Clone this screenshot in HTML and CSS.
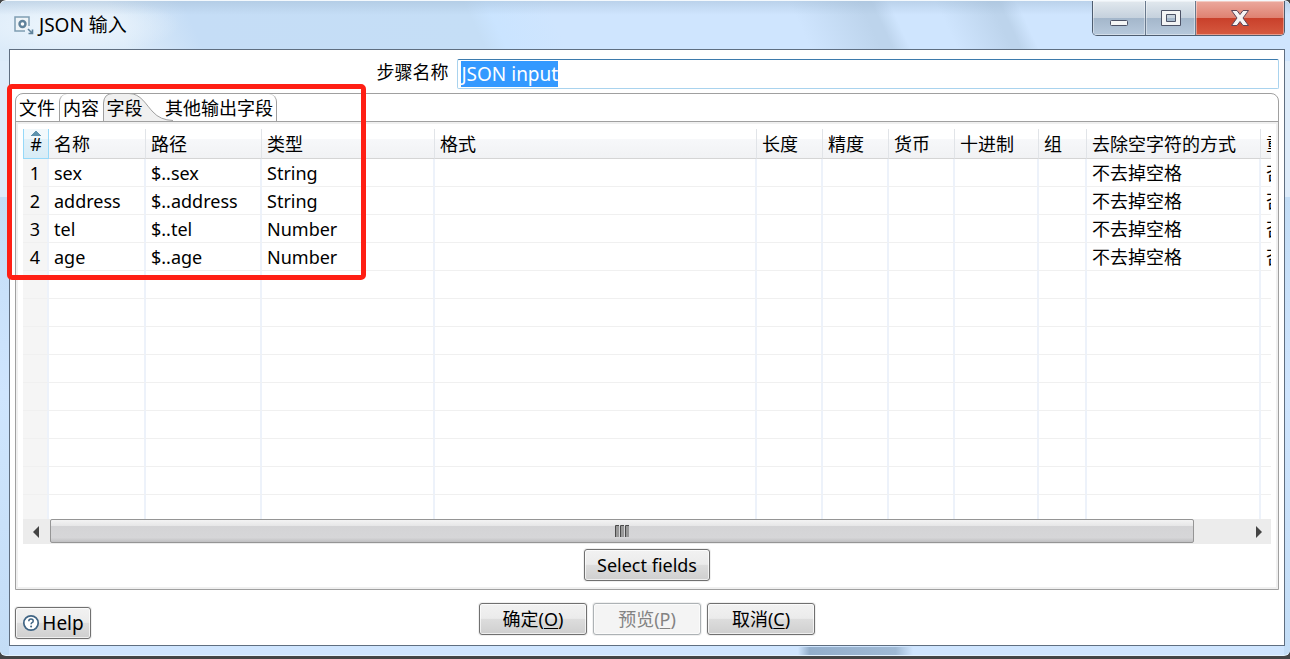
FILE: index.html
```
<!doctype html>
<html lang="zh-CN">
    <head>
        <meta charset="UTF-8" />
        <meta name="viewport" content="width=device-width" />
        <title>JSON 输入</title>
        <link rel="stylesheet" href="styles.css">
        <script src="script.js" defer></script>
    </head>
    <body>
        <div class="window">
            <header class="titlebar">
                <svg class="titleIcon" width="20" height="20" viewBox="0 0 20 20">
                    <path d="M11 16H1V2h14v9" fill="#eef4f8" stroke="#7f9db3" stroke-width="1.5" />
                    <circle cx="8.5" cy="9" r="3" fill="#fff" stroke="#5f829b" stroke-width="2.4" />
                    <path d="M14 14l4 4M18.500 14.500v4h-4" fill="none" stroke="#5f829b" stroke-width="1.6" />
                </svg>
                <h1>JSON 输入</h1>
                <div class="windowButtons">
                    <button class="minimize" title="最小化">
                        <svg width="20" height="8" viewBox="0 0 20 8">
                            <rect x="1.500" y="1.500" width="17" height="5" rx="1" fill="#f5f6f6" stroke="#4c5266" />
                        </svg>
                    </button>
                    <button class="maximize" title="最大化">
                        <svg width="20" height="16" viewBox="0 0 20 16">
                            <path d="M.5.500h19v15H.5zM5.500 4.500h9v7h-9z" fill="#f3f4f5" fill-rule="evenodd" stroke="#4c5266" />
                        </svg>
                    </button>
                    <button class="close" title="关闭">
                        <svg width="20" height="18" viewBox="0 0 20 18">
                            <path d="M1.500 1.500h5.500l3 4 3-4h5.500l-5.500 7.500 5.500 7.500h-5.500l-3-4-3 4H1.500l5.500-7.500z" fill="#f5f3f4" stroke="#5c4456" stroke-linejoin="round" />
                        </svg>
                    </button>
                </div>
            </header>
            <main class="dialog">
                <div class="stepName">
                    <label for="step">步骤名称</label>
                    <input type="text" id="step" value="JSON input" />
                </div>
                <section class="folder">
                    <nav class="tabs">
                        <button class="tab">文件</button>
                        <button class="tab">内容</button>
                        <button class="tab selected">
                            <svg width="73" height="28" viewBox="0 0 73 28">
                                <path d="M0 28V10Q1 .5 10 .5H26C38 .5 43 12 50 19Q57 27 70 27.500V28z" fill="#f0f0f0" />
                                <path d="M.5 28V10Q1 .5 10 .5H26C38 .5 43 12 50 19Q57 27 70 27.500" fill="none" stroke="#a0a0a0" />
                            </svg>
                            <span>字段</span>
                        </button>
                        <button class="tab last">其他输出字段</button>
                    </nav>
                    <div class="pane">
                        <div class="tableWrapper">
                            <table>
                                <colgroup>
                                    <col class="colNumber" />
                                    <col class="colName" />
                                    <col class="colPath" />
                                    <col class="colType" />
                                    <col class="colFormat" />
                                    <col class="colShort" />
                                    <col class="colShort" />
                                    <col class="colShort" />
                                    <col class="colDecimal" />
                                    <col class="colGroup" />
                                    <col class="colTrim" />
                                    <col class="colShort" />
                                </colgroup>
                                <thead>
                                    <tr>
                                        <th class="sorted">#</th>
                                        <th>名称</th>
                                        <th>路径</th>
                                        <th>类型</th>
                                        <th>格式</th>
                                        <th>长度</th>
                                        <th>精度</th>
                                        <th>货币</th>
                                        <th>十进制</th>
                                        <th>组</th>
                                        <th>去除空字符的方式</th>
                                        <th>重复</th>
                                    </tr>
                                </thead>
                                <tbody>
                                    <tr><td>1</td><td>sex</td><td>$..sex</td><td>String</td><td></td><td></td><td></td><td></td><td></td><td></td><td>不去掉空格</td><td>否</td></tr>
                                    <tr><td>2</td><td>address</td><td>$..address</td><td>String</td><td></td><td></td><td></td><td></td><td></td><td></td><td>不去掉空格</td><td>否</td></tr>
                                    <tr><td>3</td><td>tel</td><td>$..tel</td><td>Number</td><td></td><td></td><td></td><td></td><td></td><td></td><td>不去掉空格</td><td>否</td></tr>
                                    <tr><td>4</td><td>age</td><td>$..age</td><td>Number</td><td></td><td></td><td></td><td></td><td></td><td></td><td>不去掉空格</td><td>否</td></tr>
                                    <tr><td></td><td></td><td></td><td></td><td></td><td></td><td></td><td></td><td></td><td></td><td></td><td></td></tr>
                                    <tr><td></td><td></td><td></td><td></td><td></td><td></td><td></td><td></td><td></td><td></td><td></td><td></td></tr>
                                    <tr><td></td><td></td><td></td><td></td><td></td><td></td><td></td><td></td><td></td><td></td><td></td><td></td></tr>
                                    <tr><td></td><td></td><td></td><td></td><td></td><td></td><td></td><td></td><td></td><td></td><td></td><td></td></tr>
                                    <tr><td></td><td></td><td></td><td></td><td></td><td></td><td></td><td></td><td></td><td></td><td></td><td></td></tr>
                                    <tr><td></td><td></td><td></td><td></td><td></td><td></td><td></td><td></td><td></td><td></td><td></td><td></td></tr>
                                    <tr><td></td><td></td><td></td><td></td><td></td><td></td><td></td><td></td><td></td><td></td><td></td><td></td></tr>
                                    <tr><td></td><td></td><td></td><td></td><td></td><td></td><td></td><td></td><td></td><td></td><td></td><td></td></tr>
                                    <tr><td></td><td></td><td></td><td></td><td></td><td></td><td></td><td></td><td></td><td></td><td></td><td></td></tr>
                                </tbody>
                            </table>
                        </div>
                        <div class="scrollbar">
                            <button class="arrow" title="向左滚动">
                                <svg width="6" height="12" viewBox="0 0 6 12"><path d="M6 0v12L0 6z" fill="#444" /></svg>
                            </button>
                            <div class="track">
                                <div class="thumb">
                                    <svg width="15" height="12" viewBox="0 0 15 12">
                                        <path d="M1 0h3v12H1zM6 0h3v12H6zM11 0h3v12h-3z" fill="#999" />
                                        <path d="M.5 12V.5H4M5.500 12V.5H9M10.500 12V.5H14" fill="none" stroke="#4a4a4a" />
                                    </svg>
                                </div>
                            </div>
                            <button class="arrow" title="向右滚动">
                                <svg width="6" height="12" viewBox="0 0 6 12"><path d="M0 0v12l6-6z" fill="#444" /></svg>
                            </button>
                        </div>
                        <button class="btn selectFields">Select fields</button>
                    </div>
                </section>
                <footer class="footer">
                    <button class="btn help">
                        <svg width="18" height="18" viewBox="0 0 18 18">
                            <circle cx="9" cy="9" r="7.200" fill="#fff" stroke="#3f6484" stroke-width="1.700" />
                            <path d="M6.800 7.200q0-2.200 2.200-2.200t2.200 1.900q0 1.200-1.200 1.800-.9.500-.9 1.600" fill="none" stroke="#3f6484" stroke-width="1.500" />
                            <circle cx="9.100" cy="12.600" r="1" fill="#3f6484" />
                        </svg>
                        Help
                    </button>
                    <div class="actions">
                        <button class="btn">确定(<u>O</u>)</button>
                        <button class="btn" disabled>预览(<u>P</u>)</button>
                        <button class="btn">取消(<u>C</u>)</button>
                    </div>
                </footer>
            </main>
        </div>
        <div class="highlight"></div>
    </body>
</html>
```
FILE: styles.css
```
* {
    box-sizing: border-box;
}
body {
    margin: 0;
    background-color: #444546;
    color: #000;
    font-family: "Noto Sans", "Noto Sans CJK SC", sans-serif;
    font-size: 18px;
    line-height: 24px;
}
button,
input {
    font: inherit;
    color: inherit;
    margin: 0;
}
button {
    padding: 0;
}
svg {
    display: block;
    flex: none;
}
.window {
    display: flex;
    flex-direction: column;
    height: calc(100vh - 3px);
    padding: 0 5px 9px 9px;
    border-top: 1px solid #f4f9fd;
    border-bottom: 1px solid #e4f2fc;
    border-radius: 6px;
    /* glass frame: side edges, smudge in the bottom edge, title bar shine */
    background:
        linear-gradient(transparent 30%, #c3ddf6 30%, #cfe5fe 60%, #c3ddf6) left / 9px 100% no-repeat,
        linear-gradient(transparent 30%, #c3ddf6 30%, #cfe5fe 60%, #c3ddf6) right / 6px 100% no-repeat,
        linear-gradient(90deg, transparent, #93aecb 10%, #9fb9d4 85%, transparent) 798px 100% / 115px 8px no-repeat,
        linear-gradient(#9bb5ce66, transparent 14px),
        radial-gradient(ellipse 110px 30px at 70px 24px, #eef6fd, transparent),
        linear-gradient(65deg, transparent 735px, #bdd4ec 800px, #bdd4ec 810px, transparent 826px, transparent 868px, #bdd4ec 918px, #bdd4ec 926px, transparent 942px) top / 100% 49px no-repeat,
        linear-gradient(65deg, #dcebf9 120px, #c5ddf6 190px, #c5def6 445px, #cae4ff 465px, #cfe5fe 520px) top / 100% 60px no-repeat,
        linear-gradient(#deecfa 200px, #cfe5fe 220px);
}
.titlebar {
    display: flex;
    align-items: center;
    flex: none;
    height: 48px;
    padding-left: 5px;
}
.titleIcon {
    margin-right: 5px;
}
.titlebar h1 {
    flex: 1;
    margin: 0;
    font-size: 19px;
    font-weight: normal;
}
.windowButtons {
    display: flex;
    align-self: flex-start;
    height: 35px;
    border: 1px solid #4e5d70;
    border-top: none;
    border-radius: 0 0 5px 5px;
    overflow: hidden;
}
.windowButtons button {
    display: flex;
    justify-content: center;
    align-items: center;
    width: 53px;
    border: none;
    border-right: 1px solid #68798d;
    background: linear-gradient(#e1e8ee, #c5d1dd 50%, #a4b7cb 51%, #b7c9dc);
    box-shadow: inset 0 0 0 1px #ffffff66;
}
.windowButtons .maximize {
    width: 50px;
}
.windowButtons .minimize {
    padding-top: 10px;
}
.windowButtons .close {
    width: 88px;
    border-right: none;
    background: linear-gradient(#eba99e, #df8171 50%, #c9402b 51%, #d65a40);
}
.dialog {
    display: flex;
    flex-direction: column;
    flex: 1;
    min-height: 0;
    padding: 9px 5px 6px;
    border: 1px solid #5f6e80;
    background-color: #fff;
}
.stepName {
    display: flex;
    flex: none;
    margin-bottom: 4px;
}
.stepName label {
    width: 35%;
    padding-right: 9px;
    text-align: right;
    line-height: 26px;
}
.stepName input {
    flex: 1;
    height: 30px;
    padding: 0 3px;
    border: 1px solid #a9d3ee;
    border-top-color: #3d7bad;
    border-radius: 2px;
    outline: none;
    font-size: 19px;
}
.stepName input::selection {
    background-color: #3399ff;
    color: #fff;
}
.folder {
    display: flex;
    flex-direction: column;
    flex: 1;
    min-height: 0;
    border: 1px solid #a0a0a0;
    border-radius: 8px 8px 0 0;
}
.tabs {
    display: flex;
    flex: none;
    height: 28px;
    border-bottom: 1px solid #a0a0a0;
}
.tab {
    width: 44px;
    height: 27px;
    padding-right: 1px;
    border: none;
    background: none;
    white-space: nowrap;
}
.tab:first-child {
    width: 43px;
}
.tab + .tab {
    border-left: 1px solid #a0a0a0;
    border-top-left-radius: 8px;
}
.tabs .selected {
    position: relative;
    border: none;
}
.selected svg {
    position: absolute;
    top: -1px;
    left: 0;
}
.selected span {
    position: relative;
}
.tabs .last {
    width: 130px;
    padding: 0 3px 0 0;
    border-left: none;
    border-right: 1px solid #a0a0a0;
    border-radius: 0 8px 0 0;
    text-align: right;
}
.pane {
    display: flex;
    flex-direction: column;
    flex: 1;
    min-height: 0;
    padding: 5px 5px 6px;
    border: 2px solid #f0f0f0;
}
.tableWrapper {
    flex: 1;
    min-height: 0;
    overflow: hidden;
}
table {
    width: 1304px;
    table-layout: fixed;
    border-spacing: 0;
}
.colNumber {
    width: 26px;
}
.colName {
    width: 97px;
}
.colPath {
    width: 116px;
}
.colType {
    width: 173px;
}
.colFormat {
    width: 322px;
}
.colShort {
    width: 66px;
}
.colDecimal {
    width: 84px;
}
.colGroup {
    width: 48px;
}
.colTrim {
    width: 174px;
}
th,
td {
    height: 28px;
    padding: 0 0 0 5px;
    border-right: 2px solid #edf2fa;
    border-bottom: 1px solid #f0f0f0;
    text-align: left;
    font-weight: normal;
    white-space: nowrap;
}
th {
    height: 30px;
    border-right: 1px solid #e1e4e8;
    border-bottom-color: #d5d5d5;
    background: linear-gradient(#fff 33%, #f7f8fa 34%, #f1f2f4);
}
td:first-child {
    padding: 0;
    background-color: #f5f5f5;
    text-align: center;
}
.sorted {
    padding: 0;
    border: 1px solid #96d9f9;
    border-top: none;
    background:
        conic-gradient(from 135deg at 50% 0, #5f93ad 90deg, transparent 0) center 1px / 12px 6px no-repeat,
        linear-gradient(#f2f9fc 33%, #e1f1f9 34%, #d8ecf6);
    text-align: center;
}
.scrollbar {
    display: flex;
    flex: none;
    height: 25px;
    background-color: #ececec;
}
.arrow {
    display: flex;
    justify-content: center;
    align-items: center;
    width: 25px;
    border: none;
    background: none;
}
.track {
    flex: 1;
    padding-left: 2px;
}
.thumb {
    display: flex;
    justify-content: center;
    align-items: center;
    width: 96%;
    max-width: 1144px;
    height: 24px;
    border: 1px solid #959595;
    border-radius: 2px;
    background: linear-gradient(#f3f3f3, #e6e6e7 28%, #d4d4d6 29%, #d6d6d8 80%, #c0c0c2);
}
.btn {
    width: 108px;
    height: 32px;
    border: 1px solid #707070;
    border-radius: 3px;
    background: linear-gradient(#f2f2f2, #ebebeb 48%, #dddddd 50%, #cfcfcf);
    box-shadow: inset 0 0 0 1px #ffffffaa, 0 0 0 1px #f0f0f0;
}
.btn:disabled {
    border-color: #adb2b5;
    background: #f4f4f4;
    color: #838383;
}
.btn u {
    text-underline-offset: 2px;
}
.selectFields {
    align-self: center;
    flex: none;
    width: 126px;
    margin-top: 5px;
}
.footer {
    display: grid;
    grid-template-columns: 1fr auto 1fr;
    flex: none;
    height: 36px;
    margin-top: 13px;
}
.help {
    display: flex;
    justify-content: center;
    align-items: center;
    align-self: end;
    gap: 2px;
    width: 76px;
    font-size: 19px;
}
.actions {
    display: flex;
    gap: 6px;
}
/* red frame round the field list */
.highlight {
    position: absolute;
    top: 84px;
    left: 7px;
    width: 359px;
    height: 196px;
    border: 5px solid #ff1f14;
    border-radius: 5px;
    pointer-events: none;
}
```
FILE: script.js
```
const step = document.getElementById("step");
step.focus();
step.select();
```
